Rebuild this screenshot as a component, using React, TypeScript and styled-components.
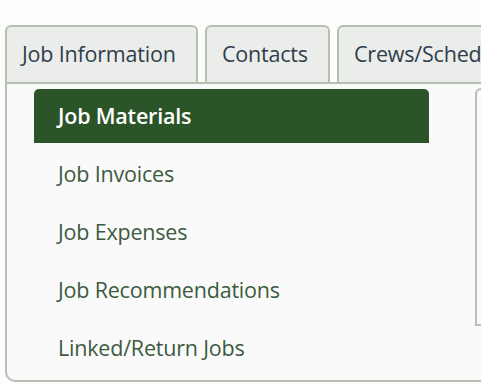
import styled, { createGlobalStyle } from "styled-components"

const GlobalStyle = createGlobalStyle`
  html, body {
    margin: 0;
    padding: 0;
    background: #fdfdfd;
    overflow: hidden;
  }
  body {
    font-family: "Open Sans", "Noto Sans", sans-serif;
  }
`

const tabs = [
  { label: 'Job Information', width: 193 },
  { label: 'Contacts', width: 125 },
  { label: 'Crews/Schedule', width: 200 },
]

const items = ['Job Materials', 'Job Invoices', 'Job Expenses', 'Job Recommendations', 'Linked/Return Jobs']

export default function App() {
  return (
    <>
      <GlobalStyle />
      <Page>
        <TabRow>
          {tabs.map((t) => (
            <Tab key={t.label} $width={t.width}>{t.label}</Tab>
          ))}
        </TabRow>
        <Panel>
          <Menu>
            {items.map((label, i) => (
              <MenuItem key={label} $active={i === 0}>{label}</MenuItem>
            ))}
          </Menu>
          <Content />
        </Panel>
      </Page>
    </>
  )
}

const Page = styled.div`
  width: 640px;
  padding: 25px 0 0 5px;
`

const TabRow = styled.div`
  display: flex;
  gap: 7px;
  height: 57px;
`

const Tab = styled.div<{ $width: number }>`
  flex: none;
  width: ${(p) => p.$width}px;
  box-sizing: border-box;
  display: flex;
  align-items: center;
  white-space: nowrap;
  background: #ebedea;
  border: 2px solid #b5c0b3;
  border-bottom: none;
  border-radius: 6px 6px 0 0;
  color: #2f3d4c;
  font-size: 21.5px;
  letter-spacing: -0.2px;
  padding: 0 0 2px 15px;
`

const Panel = styled.div`
  box-sizing: border-box;
  height: 300px;
  display: grid;
  grid-template-columns: 468px 1fr;
  border: 2px solid #b5c0b3;
  border-right: none;
  border-radius: 0 0 0 10px;
  background: #fafafa;
`

const Menu = styled.div`
  display: flex;
  flex-direction: column;
  gap: 4px;
  padding: 5px 0 0 27px;
`

const MenuItem = styled.div<{ $active?: boolean }>`
  height: 54px;
  width: 395px;
  box-sizing: border-box;
  display: flex;
  align-items: center;
  padding: 0 0 2px 24px;
  border-radius: ${(p) => (p.$active ? '5px 5px 0 0' : '0')};
  background: ${(p) => (p.$active ? '#2c5429' : 'transparent')};
  color: ${(p) => (p.$active ? '#ffffff' : '#3d5a40')};
  font-weight: ${(p) => (p.$active ? 600 : 400)};
  font-size: 21.5px;
  letter-spacing: -0.2px;
`

const Content = styled.div`
  margin-top: 4px;
  height: 234px;
  border: 2px solid #b5c0b3;
  border-right: none;
  border-radius: 6px 0 0 0;
  background: #fafafa;
`
